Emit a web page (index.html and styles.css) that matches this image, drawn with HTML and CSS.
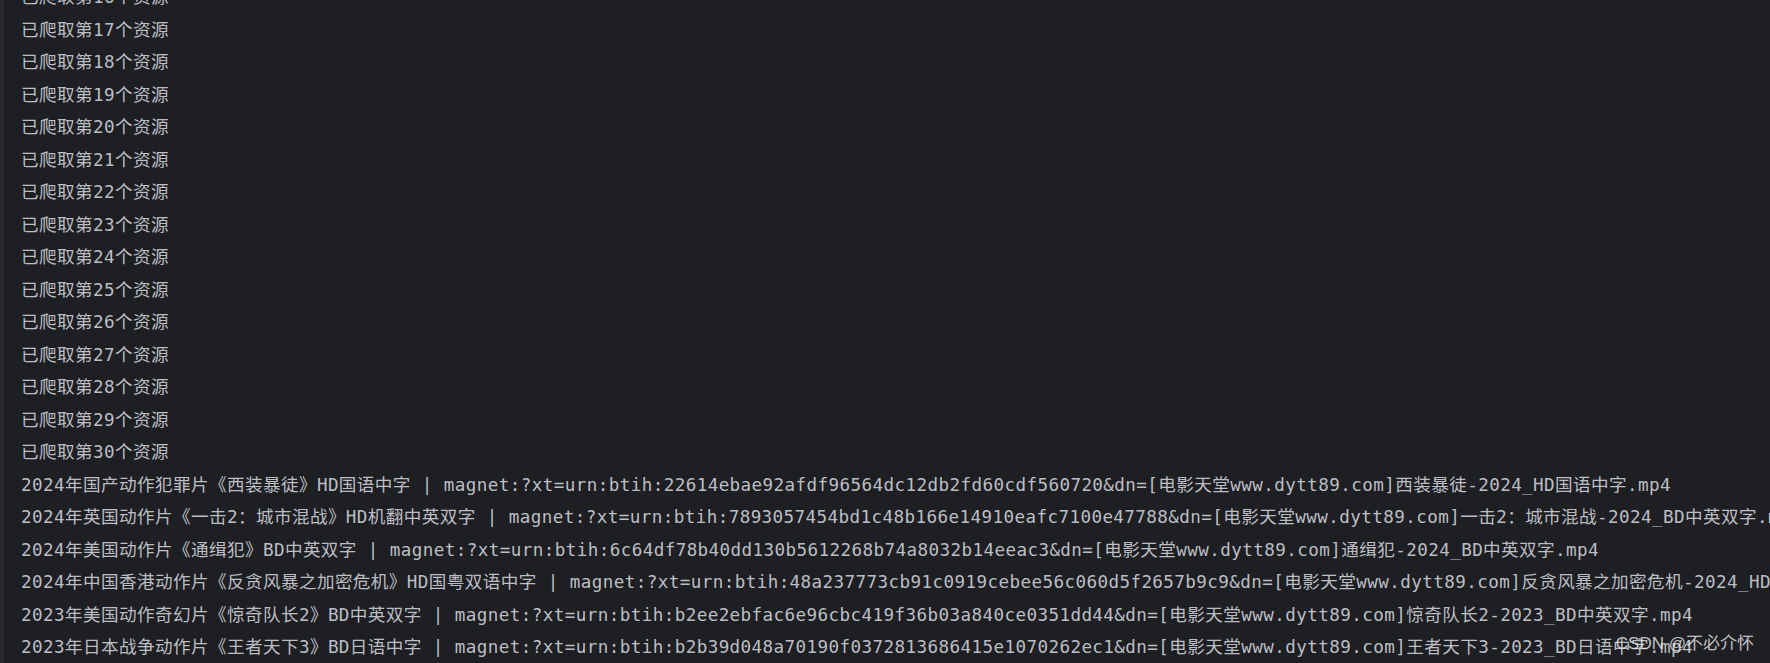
FILE: index.html
```html
<!DOCTYPE html>
<html lang="zh-CN">
<head>
<meta charset="utf-8">
<title>Console</title>
<link rel="stylesheet" href="styles.css">
</head>
<body>
<div class="console">
  <div class="gutter"></div>
  <div class="output">
    <div class="line">已爬取第16个资源</div>
    <div class="line">已爬取第17个资源</div>
    <div class="line">已爬取第18个资源</div>
    <div class="line">已爬取第19个资源</div>
    <div class="line">已爬取第20个资源</div>
    <div class="line">已爬取第21个资源</div>
    <div class="line">已爬取第22个资源</div>
    <div class="line">已爬取第23个资源</div>
    <div class="line">已爬取第24个资源</div>
    <div class="line">已爬取第25个资源</div>
    <div class="line">已爬取第26个资源</div>
    <div class="line">已爬取第27个资源</div>
    <div class="line">已爬取第28个资源</div>
    <div class="line">已爬取第29个资源</div>
    <div class="line">已爬取第30个资源</div>
    <div class="line">2024年国产动作犯罪片《西装暴徒》HD国语中字 | magnet:?xt=urn:btih:22614ebae92afdf96564dc12db2fd60cdf560720&amp;dn=[电影天堂www.dytt89.com]西装暴徒-2024_HD国语中字.mp4</div>
    <div class="line">2024年英国动作片《一击2：城市混战》HD机翻中英双字 | magnet:?xt=urn:btih:7893057454bd1c48b166e14910eafc7100e47788&amp;dn=[电影天堂www.dytt89.com]一击2：城市混战-2024_BD中英双字.mp4</div>
    <div class="line">2024年美国动作片《通缉犯》BD中英双字 | magnet:?xt=urn:btih:6c64df78b40dd130b5612268b74a8032b14eeac3&amp;dn=[电影天堂www.dytt89.com]通缉犯-2024_BD中英双字.mp4</div>
    <div class="line">2024年中国香港动作片《反贪风暴之加密危机》HD国粤双语中字 | magnet:?xt=urn:btih:48a237773cb91c0919cebee56c060d5f2657b9c9&amp;dn=[电影天堂www.dytt89.com]反贪风暴之加密危机-2024_HD国粤双语中字.mp4</div>
    <div class="line">2023年美国动作奇幻片《惊奇队长2》BD中英双字 | magnet:?xt=urn:btih:b2ee2ebfac6e96cbc419f36b03a840ce0351dd44&amp;dn=[电影天堂www.dytt89.com]惊奇队长2-2023_BD中英双字.mp4</div>
    <div class="line">2023年日本战争动作片《王者天下3》BD日语中字 | magnet:?xt=urn:btih:b2b39d048a70190f0372813686415e1070262ec1&amp;dn=[电影天堂www.dytt89.com]王者天下3-2023_BD日语中字.mp4</div>
  </div>
</div>
<div class="watermark">CSDN @不必介怀</div>
</body>
</html>
```
FILE: styles.css
```css
html, body {
  margin: 0;
  padding: 0;
  width: 1770px;
  height: 663px;
  overflow: hidden;
  background: #1e1f22;
}

.console {
  display: flex;
  height: 663px;
}

.gutter {
  flex: 0 0 4px;
  background: #26282c;
}

.output {
  flex: 1;
  min-width: 0;
  margin-top: -19px;
  padding-left: 17px;
  overflow: hidden;
  font-family: "DejaVu Sans Mono", "Noto Sans CJK SC", monospace;
  font-size: 17.6px;
  letter-spacing: 0.4px;
  line-height: 32.5px;
  color: #bcbec4;
}

.line {
  white-space: pre;
}

.watermark {
  position: absolute;
  right: 16px;
  bottom: 9px;
  font-family: "Liberation Sans", "Noto Sans CJK SC", sans-serif;
  font-size: 17px;
  color: rgba(235, 235, 235, 0.8);
}
```
